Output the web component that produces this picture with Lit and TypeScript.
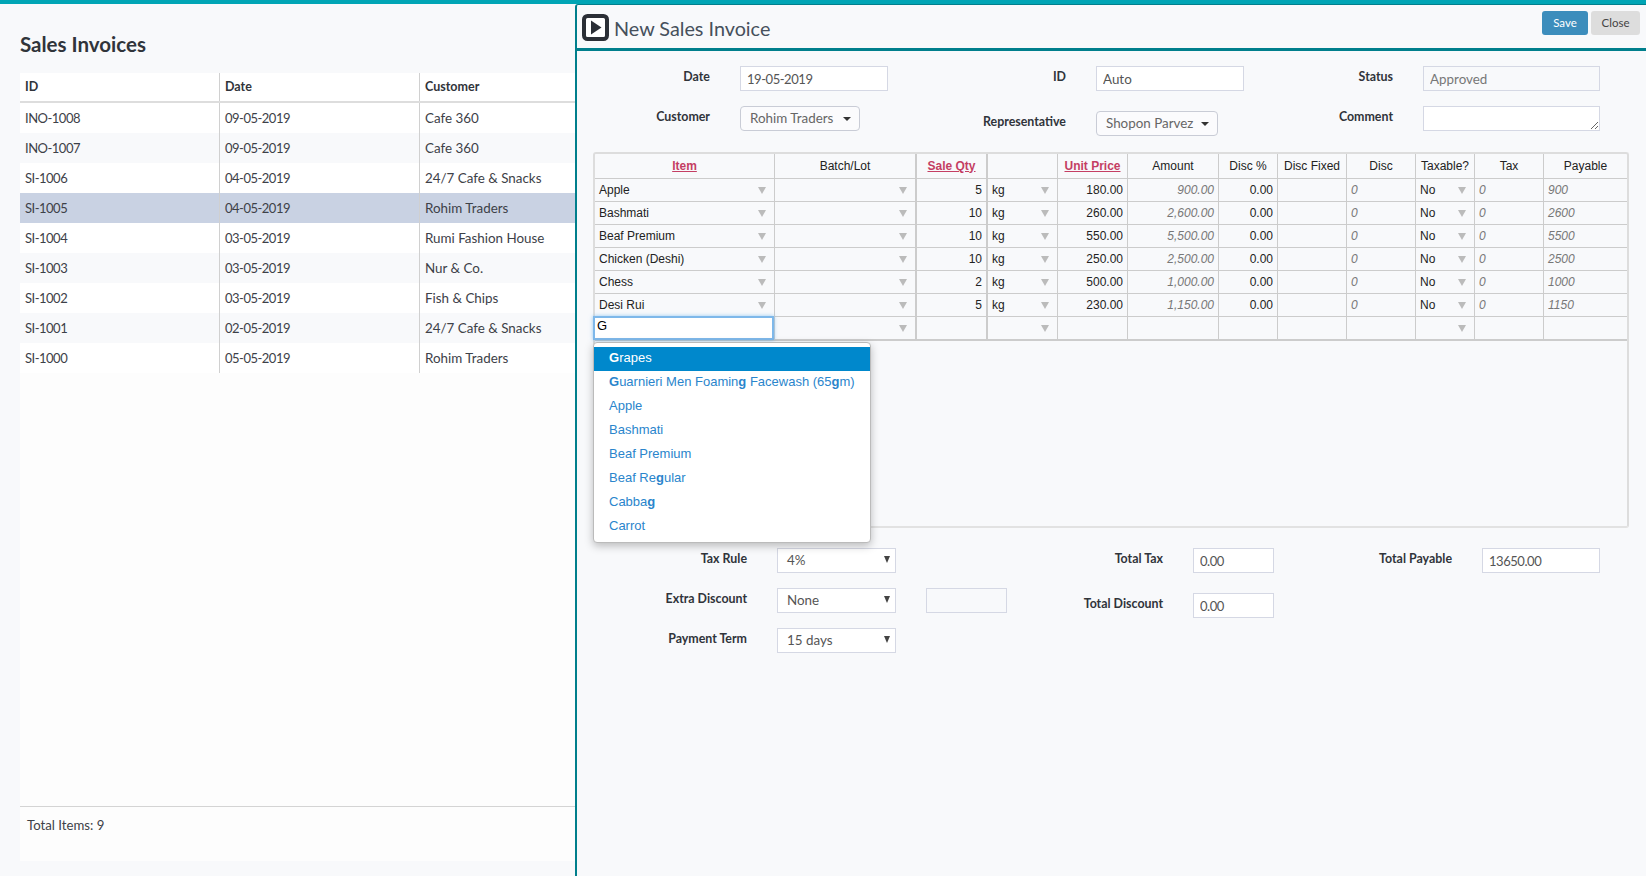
import { LitElement, html, css, nothing } from "lit";
import { customElement } from "lit/decorators.js";

const INVOICES = [
  ["INO-1008", "09-05-2019", "Cafe 360"],
  ["INO-1007", "09-05-2019", "Cafe 360"],
  ["SI-1006", "04-05-2019", "24/7 Cafe & Snacks"],
  ["SI-1005", "04-05-2019", "Rohim Traders"],
  ["SI-1004", "03-05-2019", "Rumi Fashion House"],
  ["SI-1003", "03-05-2019", "Nur & Co."],
  ["SI-1002", "03-05-2019", "Fish & Chips"],
  ["SI-1001", "02-05-2019", "24/7 Cafe & Snacks"],
  ["SI-1000", "05-05-2019", "Rohim Traders"],
];

const LINES = [
  ["Apple", "5", "180.00", "900.00", "900"],
  ["Bashmati", "10", "260.00", "2,600.00", "2600"],
  ["Beaf Premium", "10", "550.00", "5,500.00", "5500"],
  ["Chicken (Deshi)", "10", "250.00", "2,500.00", "2500"],
  ["Chess", "2", "500.00", "1,000.00", "1000"],
  ["Desi Rui", "5", "230.00", "1,150.00", "1150"],
];

const COLS = [180, 142, 71, 70, 70, 91, 59, 69, 69, 59, 69, 83];

const SUGGESTIONS = [
  "Grapes",
  "Guarnieri Men Foaming Facewash (65gm)",
  "Apple",
  "Bashmati",
  "Beaf Premium",
  "Beaf Regular",
  "Cabbag",
  "Carrot",
];

function highlight(text: string) {
  return text.split(/([gG])/).map((part, i) => (i % 2 ? html`<b>${part}</b>` : part));
}

@customElement("app-root")
export class AppRoot extends LitElement {
  static styles = css`
    :host {
      display: block;
      position: relative;
      width: 1646px;
      height: 876px;
      overflow: hidden;
      background: #f8f9fb;
      border-top: 4px solid #00a5b5;
      box-sizing: border-box;
      font-family: "Lato", "Noto Sans", sans-serif;
      color: #333;
    }
    .list {
      padding: 0 0 0 20px;
      height: 857px;
      display: flex;
      flex-direction: column;
      box-sizing: border-box;
    }
    h1 {
      margin: 0;
      height: 69px;
      padding-top: 27px;
      box-sizing: border-box;
      font-size: 20.5px;
      line-height: 26px;
      font-weight: 700;
      color: #30343a;
    }
    .panel {
      flex: 1;
      display: flex;
      flex-direction: column;
      background: #fdfdfd;
    }
    .grid-head,
    .grid-row {
      display: grid;
      grid-template-columns: 200px 200px 1fr;
    }
    .grid-head {
      height: 30px;
      background: #fff;
      border-bottom: 2px solid #ddd;
      box-sizing: border-box;
      font-weight: 700;
      color: #30343a;
      line-height: 27px;
      font-size: 12.5px;
    }
    .grid-row {
      height: 30px;
      line-height: 30px;
      font-size: 13.4px;
      background: #fff;
      color: #3d4148;
    }
    .grid-row:nth-child(even) {
      background: #f8f9fb;
    }
    .grid-row.sel {
      background: #c9d2e3;
    }
    .grid-head > div,
    .grid-row > div {
      padding-left: 5px;
      border-right: 1px solid #d0d0d0;
      white-space: nowrap;
      overflow: hidden;
    }
    .grid-head > div:last-child,
    .grid-row > div:last-child {
      border-right: none;
    }
    .grid-row > .n {
      font-size: 13px;
      letter-spacing: -0.5px;
    }
    .rows {
      flex: 1;
    }
    .foot {
      height: 55px;
      border-top: 1px solid #d4d4d4;
      padding: 8px 0 0 7px;
      box-sizing: border-box;
      font-size: 13.2px;
      line-height: 20px;
      color: #3d4148;
    }

    .dialog {
      position: absolute;
      left: 575px;
      top: 0;
      width: 1071px;
      height: 872px;
      box-sizing: border-box;
      background: #f8f9fb;
      border-left: 2px solid #007f8c;
      border-top: 1px solid #007f8c;
      border-top-left-radius: 3px;
    }
    .dlg-head {
      height: 46px;
      border-bottom: 3px solid #007f8c;
      display: flex;
      align-items: center;
      padding: 0 6px 0 5px;
      box-sizing: border-box;
      gap: 5px;
    }
    .dlg-head svg {
      flex: none;
      display: block;
      margin-top: 2px;
    }
    .dlg-head h2 {
      margin: 0;
      flex: 1;
      font-weight: 400;
      font-size: 19.8px;
      color: #46505c;
      padding-top: 3px;
    }
    .actions {
      display: flex;
      gap: 3px;
      align-self: flex-start;
      margin-top: 6px;
    }
    .btn {
      height: 24px;
      border-radius: 3px;
      font-size: 11.5px;
      line-height: 24px;
      text-align: center;
    }
    .save {
      width: 46px;
      background: #3c8dbc;
      color: #fff;
    }
    .close {
      width: 49px;
      background: #ddd;
      color: #444;
    }

    .form {
      display: grid;
      grid-template-columns: 163px 148px 208px 148px 179px 177px;
      grid-auto-rows: 25px;
      row-gap: 15px;
      padding-top: 15px;
    }
    .lab {
      text-align: right;
      padding-right: 30px;
      font-size: 12.4px;
      font-weight: 700;
      line-height: 16px;
      padding-top: 3px;
      color: #30343a;
      white-space: nowrap;
    }
    .shift {
      margin-top: 5px;
    }
    input,
    textarea,
    .btn-sel {
      box-sizing: border-box;
      font-family: inherit;
      font-size: 13.4px;
      color: #555;
      margin: 0;
      outline: none;
    }
    input,
    textarea {
      display: block;
      width: 100%;
      height: 25px;
      border: 1px solid #d5d8e4;
      background: #fff;
      padding: 0 6px;
      border-radius: 0;
    }
    input.n {
      font-size: 13px;
      letter-spacing: -0.45px;
    }
    input.off {
      background: #f8f9fb;
      color: #777;
    }
    .btn-sel {
      height: 25px;
      border: 1px solid #c9ccd6;
      border-radius: 4px;
      background: #fbfbfd;
      display: flex;
      align-items: center;
      justify-content: space-between;
      padding: 0 8px 2px 9px;
      color: #666;
      white-space: nowrap;
    }
    .caret {
      width: 0;
      height: 0;
      margin-top: 2px;
      border-left: 4px solid transparent;
      border-right: 4px solid transparent;
      border-top: 4px solid #333;
    }
    .w1 {
      width: 120px;
    }
    .w2 {
      width: 122px;
    }

    .box {
      margin: 21px 0 0 16px;
      width: 1036px;
      height: 376px;
      box-sizing: border-box;
      border-top: 2px solid #ddd;
      border-left: 2px solid #ddd;
      border-right: 2px solid #ddd;
      border-bottom: 2px solid #e2e2e2;
      border-radius: 3px;
    }
    table {
      border-collapse: separate;
      border-spacing: 0;
      table-layout: fixed;
      width: 1032px;
      font-family: "Liberation Sans", Arial, sans-serif;
      font-size: 12px;
      color: #222;
    }
    th,
    td {
      border-right: 1px solid #ccc;
      border-bottom: 1px solid #ccc;
      padding: 0 4px;
      box-sizing: border-box;
      white-space: nowrap;
      overflow: hidden;
      position: relative;
    }
    tr > :last-child {
      border-right: none;
    }
    th {
      height: 25px;
      font-weight: 400;
      text-align: center;
      color: #222;
      padding-bottom: 1px;
    }
    th.req {
      color: #c43e63;
      font-weight: 700;
      text-decoration: underline;
    }
    td {
      height: 23px;
      padding-bottom: 1px;
    }
    td.thick,
    th.thick {
      border-right-width: 2px;
    }
    td.num {
      text-align: right;
    }
    td.calc {
      color: #777;
      font-style: italic;
    }
    tr.last td {
      height: 24px;
      border-bottom-width: 2px;
    }
    .dd {
      display: flex;
      align-items: center;
      justify-content: space-between;
      padding-right: 4px;
      min-height: 14px;
    }
    .dd i {
      flex: none;
      width: 0;
      height: 0;
      margin-top: 2px;
      border-left: 4px solid transparent;
      border-right: 4px solid transparent;
      border-top: 7px solid #bbb;
    }
    tr.last .edit {
      padding: 0;
      overflow: visible;
    }
    .edit div {
      position: absolute;
      inset: -1px 0 -1px -2px;
      width: 181px;
      background: #fff;
      border: 2px solid #7eb8ea;
      box-shadow: 0 0 4px rgba(82, 168, 236, 0.6);
      box-sizing: border-box;
      padding-left: 2px;
      color: #000;
      font-size: 13px;
      line-height: 15px;
      z-index: 1;
    }

    .menu {
      position: absolute;
      left: 16px;
      top: 337px;
      width: 278px;
      height: 201px;
      box-sizing: border-box;
      background: #fff;
      border: 1px solid #bbb;
      border-radius: 4px;
      box-shadow: 0 3px 8px rgba(0, 0, 0, 0.25);
      padding: 4px 0;
      font-family: "Liberation Sans", Arial, sans-serif;
      font-size: 13px;
      z-index: 2;
    }
    .menu div {
      height: 24px;
      line-height: 22px;
      padding-left: 15px;
      color: #2a85cc;
      white-space: nowrap;
    }
    .menu div.on {
      background: #0088cc;
      color: #fff;
    }

    .totals {
      display: grid;
      grid-template-columns: 200px 119px 30px 81px 186px 81px 208px 118px;
      grid-auto-rows: 25px;
      row-gap: 15px;
      padding-top: 20px;
    }
    .native {
      background: #fff;
      border: 1px solid #d5d8e4;
      display: flex;
      align-items: center;
      justify-content: space-between;
      padding: 0 5px 2px 9px;
      box-sizing: border-box;
      height: 25px;
      font-size: 13.4px;
      color: #555;
    }
    .native i {
      width: 0;
      height: 0;
      border-left: 3px solid transparent;
      border-right: 3px solid transparent;
      border-top: 7px solid #444;
    }
    .c1 { grid-column: 1; }
    .c2 { grid-column: 2; }
    .c4 { grid-column: 4; }
    .c5 { grid-column: 5; }
    .c6 { grid-column: 6; }
    .c7 { grid-column: 7; }
    .c8 { grid-column: 8; }
  `;

  private dd(text: string) {
    return html`<div class="dd"><span>${text}</span><i></i></div>`;
  }

  private lineRow(l: string[]) {
    return html`<tr>
      <td>${this.dd(l[0])}</td>
      <td class="thick">${this.dd("")}</td>
      <td class="num thick">${l[1]}</td>
      <td>${this.dd("kg")}</td>
      <td class="num">${l[2]}</td>
      <td class="num calc">${l[3]}</td>
      <td class="num">0.00</td>
      <td></td>
      <td class="calc">0</td>
      <td>${this.dd("No")}</td>
      <td class="calc">0</td>
      <td class="calc">${l[4]}</td>
    </tr>`;
  }

  render() {
    return html`
      <section class="list">
        <h1>Sales Invoices</h1>
        <div class="panel">
          <div class="grid-head"><div>ID</div><div>Date</div><div>Customer</div></div>
          <div class="rows">
            ${INVOICES.map(
              (r) => html`<div class="grid-row ${r[0] === "SI-1005" ? "sel" : ""}">
                <div class="n">${r[0]}</div><div class="n">${r[1]}</div><div>${r[2]}</div>
              </div>`
            )}
          </div>
          <div class="foot">Total Items: 9</div>
        </div>
      </section>

      <section class="dialog">
        <header class="dlg-head">
          <svg width="27" height="27" viewBox="0 0 27 27" aria-hidden="true">
            <rect x="2" y="2" width="23" height="23" rx="3.5" fill="#fff" stroke="#2b2f36" stroke-width="4"></rect>
            <path d="M9 6.5 L19.5 13.5 L9 20.5 Z" fill="#2b2f36"></path>
          </svg>
          <h2>New Sales Invoice</h2>
          <div class="actions">
            <div class="btn save">Save</div>
            <div class="btn close">Close</div>
          </div>
        </header>

        <div class="form">
          <div class="lab">Date</div>
          <div><input class="n" value="19-05-2019" /></div>
          <div class="lab">ID</div>
          <div><input value="Auto" /></div>
          <div class="lab">Status</div>
          <div><input class="off" value="Approved" /></div>

          <div class="lab">Customer</div>
          <div><div class="btn-sel w1">Rohim Traders<span class="caret"></span></div></div>
          <div class="lab shift">Representative</div>
          <div class="shift"><div class="btn-sel w2">Shopon Parvez<span class="caret"></span></div></div>
          <div class="lab">Comment</div>
          <div><textarea></textarea></div>
        </div>

        <div class="box">
          <table>
            <colgroup>${COLS.map((w) => html`<col style="width:${w}px" />`)}</colgroup>
            <thead>
              <tr>
                <th class="req">Item</th>
                <th class="thick">Batch/Lot</th>
                <th class="req thick">Sale Qty</th>
                <th></th>
                <th class="req">Unit Price</th>
                <th>Amount</th>
                <th>Disc %</th>
                <th>Disc Fixed</th>
                <th>Disc</th>
                <th>Taxable?</th>
                <th>Tax</th>
                <th>Payable</th>
              </tr>
            </thead>
            <tbody>
              ${LINES.map((l) => this.lineRow(l))}
              <tr class="last">
                <td class="edit"><div>G</div></td>
                <td class="thick">${this.dd("")}</td>
                <td class="thick"></td>
                <td>${this.dd("")}</td>
                <td></td>
                <td></td>
                <td></td>
                <td></td>
                <td></td>
                <td>${this.dd("")}</td>
                <td></td>
                <td></td>
              </tr>
            </tbody>
          </table>
        </div>

        <div class="totals">
          <div class="lab c1">Tax Rule</div>
          <div class="native c2">4%<i></i></div>
          <div class="lab c5">Total Tax</div>
          <div class="c6"><input class="n" value="0.00" /></div>
          <div class="lab c7">Total Payable</div>
          <div class="c8"><input class="n" value="13650.00" /></div>

          <div class="lab c1">Extra Discount</div>
          <div class="native c2">None<i></i></div>
          <div class="c4"><input class="off" /></div>
          <div class="lab c5 shift">Total Discount</div>
          <div class="c6 shift"><input class="n" value="0.00" /></div>

          <div class="lab c1">Payment Term</div>
          <div class="native c2">15 days<i></i></div>
        </div>

        <div class="menu">
          ${SUGGESTIONS.map(
            (s, i) => html`<div class=${i === 0 ? "on" : nothing}>${highlight(s)}</div>`
          )}
        </div>
      </section>
    `;
  }
}
